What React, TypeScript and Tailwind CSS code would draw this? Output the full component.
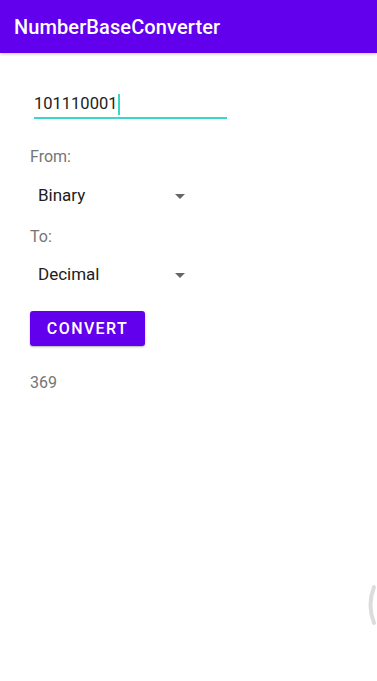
import React from 'react';

function Dropdown({ value }: { value: string }) {
    return (
        <div className="flex items-center w-[158px] h-[48px] pl-[8px]">
            <span className="flex-1 text-[17px] text-[#212121]">{value}</span>
            <svg width="10" height="5" viewBox="0 0 10 5" className="mr-[3px]">
                <path d="M0 0 L10 0 L5 5 Z" fill="#666666" />
            </svg>
        </div>
    );
}

export default function App() {
    return (
        <div className="relative w-[377px] h-[681px] bg-white overflow-hidden font-['Roboto',sans-serif]">
            <div className="h-[53px] bg-[#6200EE] flex items-center px-[14px] shadow-[0_1px_3px_rgba(0,0,0,0.25)]">
                <h1 className="text-white text-[20px] font-medium tracking-[0.1px]">NumberBaseConverter</h1>
            </div>

            <div className="pl-[30px] pt-[38px]">
                <div className="ml-[4px] w-[193px] h-[28px] border-b-2 border-[#3ad6c8] flex items-center">
                    <span className="text-[16.5px] text-[#212121] leading-none">101110001</span>
                    <span className="w-[2px] h-[21px] bg-[#3ad6c8] ml-[1px]" />
                </div>

                <p className="mt-[28px] text-[16px] text-[#757575] leading-[20px]">From:</p>
                <div className="mt-[5px]">
                    <Dropdown value="Binary" />
                </div>

                <p className="mt-[7px] text-[16px] text-[#757575] leading-[20px]">To:</p>
                <div className="mt-[4px]">
                    <Dropdown value="Decimal" />
                </div>

                <button className="mt-[12px] w-[115px] h-[35px] rounded-[3px] bg-[#6200EE] text-white text-[16px] font-medium tracking-[1.4px] shadow-[0_1px_2px_rgba(0,0,0,0.3)]">
                    CONVERT
                </button>

                <p className="mt-[27px] text-[16px] text-[#757575] leading-[20px]">369</p>
            </div>

            <svg className="absolute left-[362px] top-[583px]" width="15" height="44" viewBox="0 0 15 44">
                <path d="M12 4 Q5 22 12 40" stroke="#dcdcdc" strokeWidth="4" fill="none" strokeLinecap="round" />
            </svg>
        </div>
    );
}
